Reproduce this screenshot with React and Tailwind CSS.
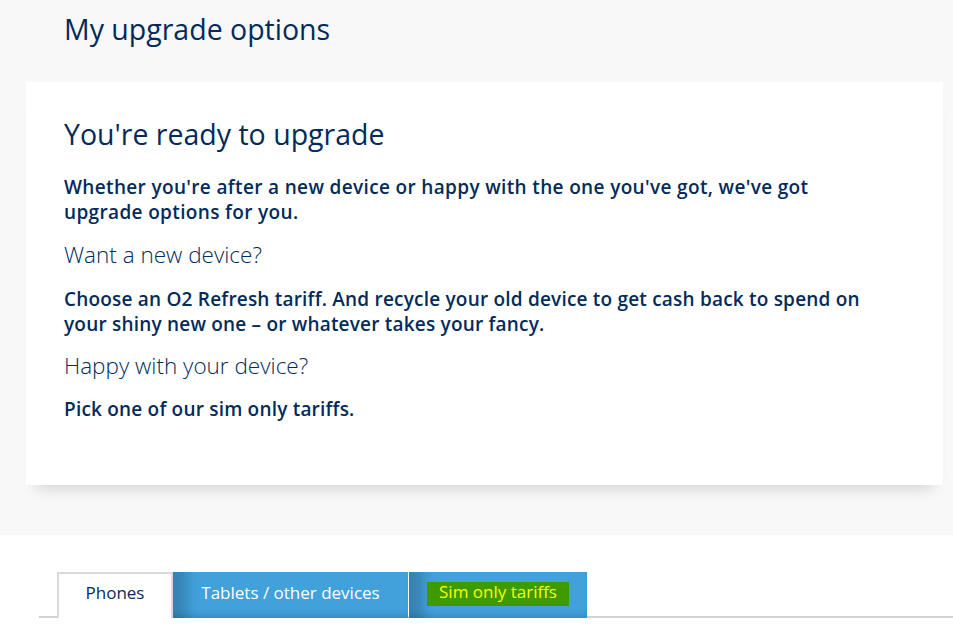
export default function App() {
  const font = { fontFamily: '"Open Sans", "Noto Sans", Arial, sans-serif' }
  return (
    <div className="h-[628px] w-[953px] overflow-hidden bg-white text-[#032b5a]" style={font}>
      <section className="bg-[#f8f8f8] pb-[50px]">
        <h1 className="pl-[64px] pt-[9px] text-[28.5px] leading-[40px] font-normal">My upgrade options</h1>
        <div className="ml-[26px] mr-[10px] mt-[33px] h-[403px] bg-white pl-[38px] pt-[32px] shadow-[0_14px_14px_-10px_rgba(0,0,0,0.14)]">
          <h2 className="text-[28.5px] leading-[40px] font-normal">You're ready to upgrade</h2>
          <p className="mt-[21px] text-[19px] leading-[25px] font-semibold tracking-[0.35px]">
            Whether you're after a new device or happy with the one you've got, we've got
            <br />
            upgrade options for you.
          </p>
          <h3 className="mt-[15px] text-[22.5px] leading-[30px] font-light">Want a new device?</h3>
          <p className="mt-[17px] text-[19px] leading-[25px] font-semibold tracking-[0.2px]">
            Choose an O2 Refresh tariff. And recycle your old device to get cash back to spend on
            <br />
            your shiny new one – or whatever takes your fancy.
          </p>
          <h3 className="mt-[14px] text-[22.5px] leading-[30px] font-light">Happy with your device?</h3>
          <p className="mt-[16px] text-[19px] leading-[25px] font-semibold tracking-[0.2px]">Pick one of our sim only tariffs.</p>
        </div>
      </section>
      <nav className="ml-[39px] mt-[37px] flex h-[46px] items-end border-b-2 border-[#d3d3d3] pl-[18px]">
        <div className="-mb-[2px] flex h-[46px] w-[116px] items-center justify-center border-x-2 border-t-2 border-[#d9d9d9] bg-white pb-[6px] text-[17px]">
          Phones
        </div>
        <div className="-mb-[2px] flex h-[46px] w-[235px] items-center justify-center bg-[#42a0db] pb-[5px] text-[17px] text-white shadow-[inset_30px_0_12px_-16px_rgba(0,0,0,0.18),inset_0_-7px_6px_-4px_rgba(0,0,0,0.14)]">
          Tablets / other devices
        </div>
        <div className="-mb-[2px] ml-px flex h-[46px] w-[178px] items-center justify-center bg-[#42a0db] pb-[2px] text-[17px] shadow-[inset_30px_0_12px_-16px_rgba(0,0,0,0.18),inset_0_-7px_6px_-4px_rgba(0,0,0,0.14)]">
          <span className="bg-[#3f9a00] px-[12px] pb-[4px] leading-[20px] text-[#f3ff00]">Sim only tariffs</span>
        </div>
      </nav>
    </div>
  )
}
